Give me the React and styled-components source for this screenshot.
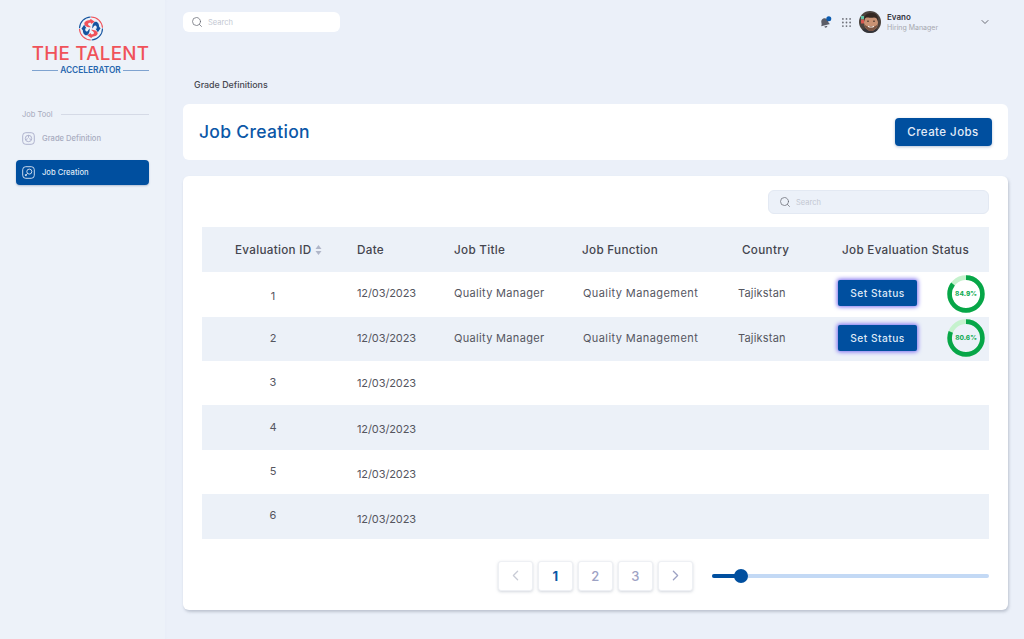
import React from "react";
import styled, { createGlobalStyle } from "styled-components";
import { Search, ChevronDown, ChevronLeft, ChevronRight } from "lucide-react";

const Global = createGlobalStyle`
  html, body { margin: 0; padding: 0; background: #ebf0f9; }
  * { box-sizing: border-box; }
  body { font-family: Inter, "Liberation Sans", sans-serif; color: #3d3d46; }
`;
const Page = styled.div`
  width: 1024px; height: 639px; display: flex; overflow: hidden; background: #ebf0f9;
`;
const Sidebar = styled.aside`
  width: 165px; flex: none; padding: 16px 16px 0 16px; background: #edf2f9;
  box-shadow: 1px 0 2px rgba(225, 232, 245, .3);
`;
const Brand = styled.div`
  display: flex; flex-direction: column; align-items: center; height: 59px; padding-left: 16px; width: 133px;
`;
const BrandTop = styled.div`
  font-size: 18.8px; line-height: 20px; font-weight: 500; color: #f0525a; white-space: nowrap; margin-top: 3px; letter-spacing: .25px;
`;
const BrandSub = styled.div`
  width: 117px; margin-top: 1px; display: flex; align-items: center; gap: 2px; font-size: 8.3px; line-height: 10px; font-weight: 600; color: #2766ae; white-space: nowrap;
  &::before, &::after { content: ""; flex: 1; height: 1px; background: #7fa3d0; }
`;
const SectionHead = styled.div`
  margin: 33px 0 0 6px; height: 12px; display: flex; align-items: center; gap: 8px; font-size: 7.5px; color: #a5a9bb;
  &::after { content: ""; flex: 1; height: 1px; background: #d5dae6; }
`;
const NavItem = styled.div`
  height: 25px; border-radius: 4px; display: flex; align-items: center; gap: 7px; padding-left: 6px;
  margin-top: ${p => p.$top}px; font-size: 7.6px; font-weight: 500;
  background: ${p => (p.$active ? "#004f9f" : "transparent")};
  color: ${p => (p.$active ? "#dfe8f6" : "#a8acc0")};
  box-shadow: ${p => (p.$active ? "0 1px 2px rgba(0,40,100,.25)" : "none")};
`;
const Main = styled.main`
  flex: 1; min-width: 0; padding: 12px 16px 0 18px; display: flex; flex-direction: column;
`;
const TopBar = styled.header`
  display: flex; align-items: center; justify-content: space-between; height: 20px;
`;
const SearchBox = styled.div`
  height: ${p => p.$inner ? 24 : 20}px; width: ${p => p.$inner ? 221 : 157}px; border-radius: 6px;
  background: ${p => p.$inner ? "#ecf1f9" : "#fff"};
  border: ${p => p.$inner ? "1px solid #e3e9f3" : "none"};
  display: flex; align-items: center; gap: 5px; padding-left: ${p => p.$inner ? 10 : 8}px;
  font-size: 7.5px; color: #c3c7d2;
`;
const UserArea = styled.div`
  display: flex; align-items: center;
`;
const BellSlot = styled.div`display: flex; margin-right: 10px;`;
const DotsSlot = styled.div`display: flex; margin-right: 8px;`;
const ChevronSlot = styled.div`display: flex; margin-right: 17px;`;
const UserText = styled.div`
  width: 92px; margin-left: 6px; display: flex; flex-direction: column; gap: 1px;
`;
const UserName = styled.div`font-size: 8px; line-height: 10px; font-weight: 600; color: #33343d;`;
const UserRole = styled.div`font-size: 7px; line-height: 10px; color: #a6a7ae;`;
const Breadcrumb = styled.div`
  margin: 47px 0 0 11px; height: 12px; line-height: 12px; font-size: 8.9px; font-weight: 500; color: #45464f;
`;
const TitleCard = styled.section`
  margin-top: 13px; height: 56px; background: #fff; border-radius: 6px; display: flex; align-items: center;
  justify-content: space-between; padding: 0 16px;
`;
const Title = styled.h1`
  margin: 0 0 2px; font-size: 17.5px; font-weight: 500; color: #0b57a7; letter-spacing: .3px;
`;
const PrimaryButton = styled.button`
  height: 28px; width: 97px; border: 0; border-radius: 4px; background: #004f9f; color: #e4ecf8; padding: 0 1px 0 0;
  font: 500 11.5px Inter, "Liberation Sans", sans-serif; letter-spacing: .45px;
  box-shadow: 0 1px 3px rgba(0,50,120,.3);
`;
const TableCard = styled.section`
  margin-top: 16px; height: 434px; background: #fff; border-radius: 6px; padding: 14px 19px 0 19px;
  box-shadow: 1px 2px 3px rgba(120,130,150,.4);
`;
const TableTools = styled.div`display: flex; justify-content: flex-end; height: 24px; margin-bottom: 13px;`;
const Row = styled.div`
  display: grid; grid-template-columns: 155px 97px 128px 156px 100px 151px;
  height: ${p => p.$h}px; align-items: center;
  background: ${p => p.$shade ? "#ecf1f8" : "#fff"};
`;
const HeadCell = styled.div`
  font-size: 11.7px; font-weight: 500; color: #44454e; white-space: nowrap; padding-left: ${p => p.$pad || 0}px;
  display: flex; align-items: center; gap: 3px; letter-spacing: .3px;
`;
const IdCell = styled.div`
  font-size: 11px; color: #55565f; text-align: center; padding-right: 13px;
  padding-top: ${p => Math.max(p.$dy, 0)}px; padding-bottom: ${p => Math.max(-p.$dy, 0)}px;
`;
const DateCell = styled.div`
  font-size: 11px; color: #55565f; white-space: nowrap; letter-spacing: -.1px;
  padding-top: ${p => Math.max(p.$dy, 0)}px; padding-bottom: ${p => Math.max(-p.$dy, 0)}px;
`;
const Cell = styled.div`
  font-size: 11px; color: #55565f; white-space: nowrap; padding-left: ${p => p.$pad || 0}px;
  padding-bottom: ${p => p.$lift}px; letter-spacing: ${p => p.$ls}px;
`;
const StatusCell = styled.div`
  display: flex; align-items: center; justify-content: space-between; padding-right: 4px;
  padding-bottom: ${p => p.$lift}px;
`;
const StatusButton = styled.button`
  width: 79px; height: 26px; border: 0; border-radius: 2px; background: #004f9f; color: #dfe8f6; padding: 0;
  font: 500 10.2px Inter, "Liberation Sans", sans-serif; letter-spacing: .5px;
  box-shadow: 0 0 4px 1px #7b6cf0;
`;
const GaugeWrap = styled.div`
  position: relative; width: 38px; height: 38px; display: flex; align-items: center; justify-content: center;
  margin-top: ${p => p.$drop}px;
`;
const GaugeLabel = styled.span`
  font-size: 6.5px; font-weight: 800; color: #17ad57; position: relative;
`;
const GaugeSvg = styled.svg`position: absolute; inset: 0;`;
const Footer = styled.div`
  margin-top: 22px; display: flex; align-items: center; padding-left: 296px;
`;
const Pager = styled.div`display: flex; gap: 5.5px;`;
const PageBtn = styled.div`
  width: 34.5px; height: 29.5px; border: 1px solid #eef0f4; border-radius: 3px; background: #fff;
  box-shadow: 0 1px 3px rgba(130,140,160,.35);
  display: flex; align-items: center; justify-content: center;
  font-size: 13px; font-weight: ${p => p.$active ? 700 : 500};
  color: ${p => p.$active ? "#0b57a7" : "#9da2c4"};
`;
const Slider = styled.div`
  margin-left: 19px; width: 278px; height: 4px; border-radius: 2px; background: #c3d9f5; position: relative;
`;
const SliderFill = styled.div`height: 100%; border-radius: 2px; background: #004f9f;`;
const Knob = styled.div`
  position: absolute; top: -5px; width: 14px; height: 14px; border-radius: 50%; background: #004f9f; transform: translateX(-7px);
`;

const BLOB = "M15 13.500C11 13.500 7.500 12.500 7 9.500C6.800 6.800 10 5.200 13 5.200L14.800 3.500L19.500 6.800L15.200 9.500L15 8C12.500 8 11 8.800 11.500 10.300C12 11.800 14 12 15 13.500z";
const Logo = () => (
  <svg width="30" height="30" viewBox="0 0 30 30">
    <g transform="rotate(-90 15 15)" fill="none" strokeWidth="1.3">
      <circle cx="15" cy="15" r="13.800" stroke="#f0525a" strokeDasharray="20.700 22.660" />
      <circle cx="15" cy="15" r="13.800" stroke="#15549f" strokeDasharray="20.700 22.660" transform="rotate(90 15 15)" />
    </g>
    {[0, 90, 180, 270].map((a, i) => (
      <path key={a} d={BLOB} transform={`rotate(${a} 15 15)`} fill={i % 2 ? "#15549f" : "#f0525a"} />
    ))}
  </svg>
);
const NavIcon = ({ color, variant }) => (
  <svg width="13" height="13" viewBox="0 0 13 13" fill="none" stroke={color} strokeWidth="0.9">
    <rect x="0.7" y="0.7" width="11.6" height="11.6" rx="3" />
    {variant === "grade" ? (
      <>
        <circle cx="6.5" cy="6.5" r="3.2" />
        <path d="M6.5 3.3v2.4M3.5 7.6l2.2-.9M9.5 7.6l-2.2-.9" />
      </>
    ) : (
      <>
        <circle cx="7.3" cy="5.6" r="2.5" />
        <path d="M5.5 7.400L3.400 9.600M3.400 8.200v1.400h1.400" />
      </>
    )}
  </svg>
);
const BellDot = () => (
  <svg width="12" height="13" viewBox="0 0 12 13">
    <g transform="rotate(-14 5 7)" fill="#5c5e68">
      <path d="M5 2.200c2.200 0 3.400 1.600 3.400 3.600 0 2 .6 2.800 1.300 3.500H.3C1 8.600 1.600 7.800 1.600 5.800 1.600 3.800 2.800 2.200 5 2.200z" />
      <path d="M3.500 10.200h3a1.500 1.500 0 0 1-3 0z" />
    </g>
    <circle cx="8.800" cy="2.800" r="2.500" fill="#0b5cb0" />
  </svg>
);
const GridDots = () => (
  <svg width="9" height="9" viewBox="0 0 9 9" fill="#6d6f78">
    {[0.9, 4.5, 8.1].flatMap(y => [0.9, 4.5, 8.1].map(x => <circle key={`${x}-${y}`} cx={x} cy={y} r="0.9" />))}
  </svg>
);
const Avatar = () => (
  <svg width="22" height="22" viewBox="0 0 22 22">
    <clipPath id="av"><circle cx="11" cy="11" r="11" /></clipPath>
    <g clipPath="url(#av)">
      <rect width="22" height="22" fill="#4b423d" />
      <rect x="2" y="5" width="3" height="3.500" fill="#5fc4a5" />
      <rect x="2" y="8.500" width="3" height="4" fill="#d8574f" />
      <path d="M1 22c1-4 5-5 10-5s9 1 10 5z" fill="#34343a" />
      <ellipse cx="12" cy="11.500" rx="7" ry="8.500" fill="#c99274" />
      <path d="M5 10C4.500 4.500 8 2 12.500 2S19.500 4.500 19 10C18 7.500 17 6.500 15 6.500 12 7 9 6.500 7.500 6.500 6 7 5.500 8 5 10z" fill="#342822" />
      <path d="M5.200 12.500c.8 5.500 3.800 7.500 6.800 7.500s6-2 6.800-7.500c-1 2.800-3 2.800-6.800 2.800s-5.800 0-6.800-2.800z" fill="#7a5544" />
      <path d="M9 15.300c1.500 1 4.500 1 6 0" stroke="#f7ede6" strokeWidth="1.100" fill="none" />
      <path d="M8 10.200h2M14 10.200h2" stroke="#3a2a22" strokeWidth=".9" />
    </g>
  </svg>
);
const SortIcon = () => (
  <svg width="7" height="10" viewBox="0 0 7 10" fill="#b0b6c8">
    <path d="M3.500 0L6.500 4H.5zM3.500 10L.5 6h6z" />
  </svg>
);
const Gauge = ({ value, drop }) => {
  const r = 16.4, c = 2 * Math.PI * r;
  return (
    <GaugeWrap $drop={drop}>
      <GaugeSvg width="38" height="38" viewBox="0 0 38 38">
        <circle cx="19" cy="19" r={r} fill="none" stroke="#c5f2cd" strokeWidth="4.6" />
        <circle cx="19" cy="19" r={r} fill="none" stroke="#07a648" strokeWidth="4.6"
          strokeDasharray={`${c * value / 100} ${c}`} transform="rotate(-90 19 19)" />
      </GaugeSvg>
      <GaugeLabel>{value}%</GaugeLabel>
    </GaugeWrap>
  );
};

const rows = [
  { id: 1, h: 45, idDy: 3, dateDy: -3, lift: 3, filled: true, gauge: 84.9, drop: 2 },
  { id: 2, h: 44, idDy: -2, dateDy: -2, lift: 2, filled: true, gauge: 80.6, drop: 0 },
  { id: 3, h: 44, idDy: -2, dateDy: 0, lift: 0 },
  { id: 4, h: 45, idDy: -2, dateDy: 2, lift: 0 },
  { id: 5, h: 44, idDy: -2, dateDy: 3, lift: 0 },
  { id: 6, h: 45, idDy: -3, dateDy: 5, lift: 0 },
];

export default function App() {
  return (
    <Page>
      <Global />
      <Sidebar>
        <Brand>
          <Logo />
          <BrandTop>THE TALENT</BrandTop>
          <BrandSub>ACCELERATOR</BrandSub>
        </Brand>
        <SectionHead>Job Tool</SectionHead>
        <NavItem $top={6}><NavIcon color="#a8acc8" variant="grade" />Grade Definition</NavItem>
        <NavItem $top={9} $active><NavIcon color="#dfe8f6" variant="job" />Job Creation</NavItem>
      </Sidebar>
      <Main>
        <TopBar>
          <SearchBox><Search size={12} color="#6a6c75" strokeWidth={1.5} />Search</SearchBox>
          <UserArea>
            <BellSlot><BellDot /></BellSlot>
            <DotsSlot><GridDots /></DotsSlot>
            <Avatar />
            <UserText>
              <UserName>Evano</UserName>
              <UserRole>Hiring Manager</UserRole>
            </UserText>
            <ChevronSlot><ChevronDown size={12} color="#6a6c75" /></ChevronSlot>
          </UserArea>
        </TopBar>
        <Breadcrumb>Grade Definitions</Breadcrumb>
        <TitleCard>
          <Title>Job Creation</Title>
          <PrimaryButton>Create Jobs</PrimaryButton>
        </TitleCard>
        <TableCard>
          <TableTools>
            <SearchBox $inner><Search size={12} color="#6a6c75" strokeWidth={1.5} />Search</SearchBox>
          </TableTools>
          <Row $h={45} $shade>
            <HeadCell $pad={33}>Evaluation ID <SortIcon /></HeadCell>
            <HeadCell>Date</HeadCell>
            <HeadCell>Job Title</HeadCell>
            <HeadCell>Job Function</HeadCell>
            <HeadCell $pad={4}>Country</HeadCell>
            <HeadCell $pad={4}>Job Evaluation Status</HeadCell>
          </Row>
          {rows.map((r, i) => (
            <Row key={r.id} $h={r.h} $shade={i % 2 === 1}>
              <IdCell $dy={r.idDy}>{r.id}</IdCell>
              <DateCell $dy={r.dateDy}>12/03/2023</DateCell>
              <Cell $lift={r.lift} $ls={0.32}>{r.filled && "Quality Manager"}</Cell>
              <Cell $lift={r.lift} $pad={1} $ls={0.42}>{r.filled && "Quality Management"}</Cell>
              <Cell $lift={r.lift} $ls={0.2}>{r.filled && "Tajikstan"}</Cell>
              {r.gauge ? (
                <StatusCell $lift={r.lift}><StatusButton>Set Status</StatusButton><Gauge value={r.gauge} drop={r.drop} /></StatusCell>
              ) : <div />}
            </Row>
          ))}
          <Footer>
            <Pager>
              <PageBtn><ChevronLeft size={17} color="#c9ccd6" strokeWidth={1.8} /></PageBtn>
              <PageBtn $active>1</PageBtn>
              <PageBtn>2</PageBtn>
              <PageBtn>3</PageBtn>
              <PageBtn><ChevronRight size={17} color="#9da2c4" strokeWidth={1.8} /></PageBtn>
            </Pager>
            <Slider>
              <SliderFill style={{ width: "10.5%" }} />
              <Knob style={{ left: "10.5%" }} />
            </Slider>
          </Footer>
        </TableCard>
      </Main>
    </Page>
  );
}
